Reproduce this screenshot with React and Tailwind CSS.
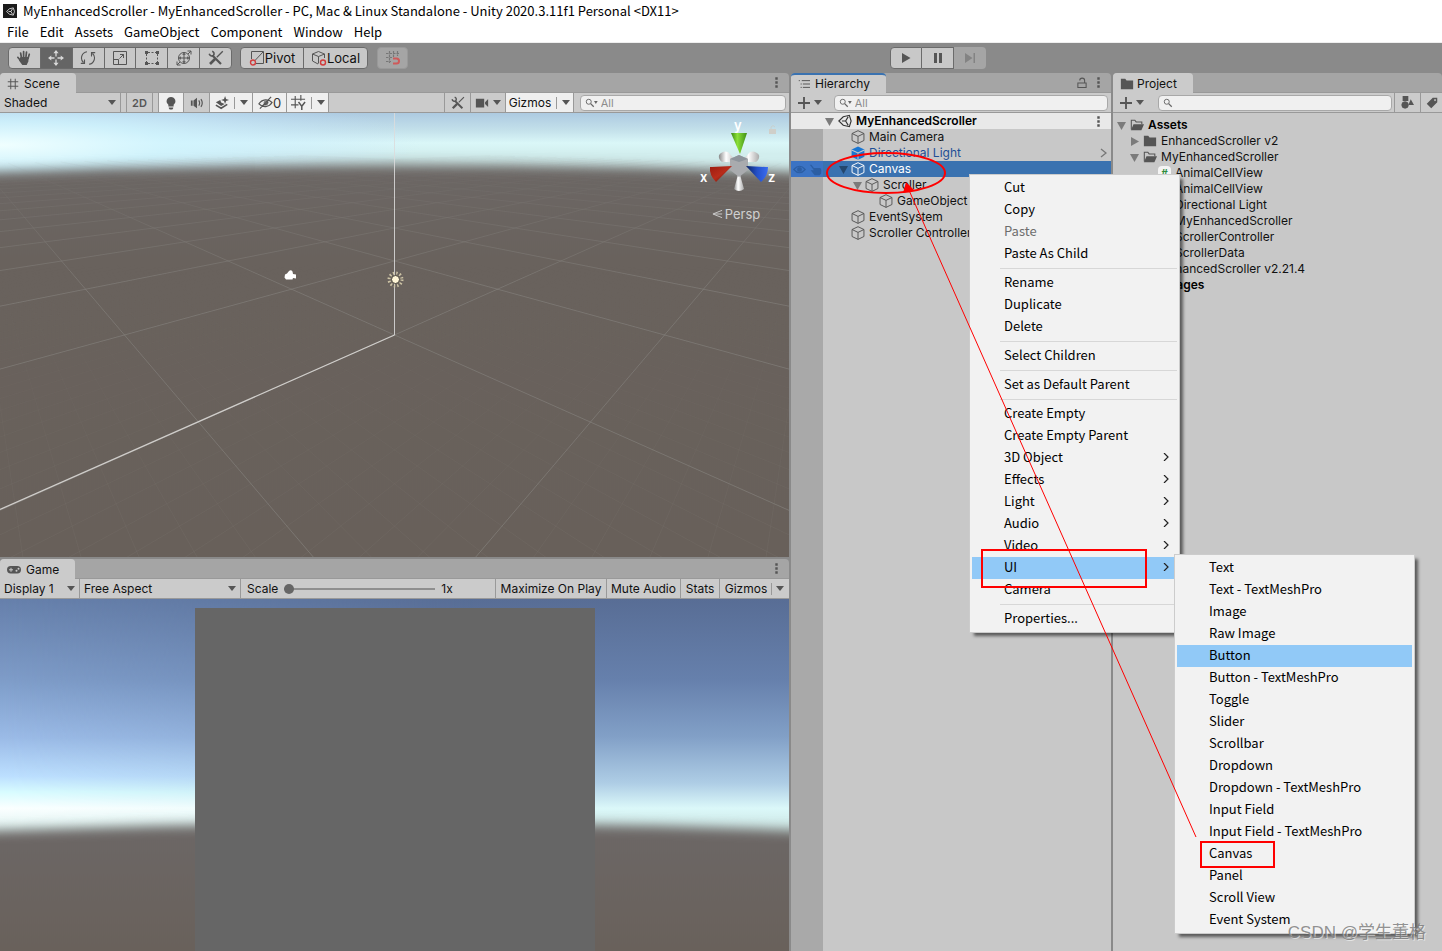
import React from 'react';

/* ---------- icons ---------- */

function Svg({ size = 16, className = '', children }) {
  return (
    <svg width={size} height={size} viewBox="0 0 16 16" fill="none" stroke="currentColor" className={`shrink-0 ${className}`} aria-hidden="true">
      {children}
    </svg>
  )
}

const Caret = ({ className = '' }) => (
  <svg width="8" height="5" viewBox="0 0 8 5" className={`shrink-0 fill-[#555] ${className}`} aria-hidden="true"><path d="M0 0h8L4 5z" /></svg>
)

const UnityIcon = ({ size, className }) => (
  <Svg size={size} className={className}>
    <path strokeWidth="1.300" d="M1 8 6 3.200l7-1.700L15 8l-2 6.500-7-1.700zM4.500 8h4.200M8.700 8l3-5M8.700 8l3 5" />
  </Svg>
)

const HandIcon = () => (
  <Svg>
    <path strokeWidth="1.700" strokeLinecap="round" d="M5.500 8 4.600 3M7.600 7.500V1.600M9.900 7.500l.6-5.300M12 8.500l1.300-4.300M4.500 10.500 1.800 7.300" />
    <path fill="currentColor" stroke="none" d="M4.500 7h8.300l-.5 4.500-1.600 3.500H6.300L3 10.500z" />
  </Svg>
)

const MoveIcon = () => (
  <Svg>
    <path d="M8 2v4.500M8 9.500V14M2 8h4.500M9.500 8H14" strokeWidth="1.300" />
    <path fill="currentColor" stroke="none" d="M8 0l2.600 3.300H5.400zM8 16l2.600-3.300H5.400zM0 8l3.300-2.600v5.200zM16 8l-3.300-2.600v5.200z" />
  </Svg>
)

const RotateIcon = () => (
  <Svg>
    <path strokeWidth="1.100" d="M7 1.800A6.200 6.200 0 0 0 3.500 12.500M.8 13.400h3.700V9.600M9 14.200A6.200 6.200 0 0 0 12.500 3.500M15.200 2.600h-3.700v3.800" />
  </Svg>
)

const ScaleIcon = () => (
  <Svg>
    <path strokeWidth="1" d="M1.500 1.500h13v13h-13zM1.500 9.500h5v5M7.500 8.500l4-4M8 4.500h3.500V8" />
  </Svg>
)

const RectIcon = () => (
  <Svg>
    <path strokeDasharray="2 1.500" d="M4 2.500h8M4 13.500h8M2.500 4v8M13.500 4v8" />
    <path fill="currentColor" stroke="none" d="M1 1h3v3H1zM12 1h3v3h-3zM1 12h3v3H1zM12 12h3v3h-3z" />
  </Svg>
)

const TransformIcon = () => (
  <Svg>
    <circle cx="8" cy="8" r="5.500" />
    <path d="M8 4v8M4 8h8M11.500 1H15v3.500M1 11.500V15h3.500M15 1l-3 3M1 15l3-3" />
    <path fill="currentColor" stroke="none" d="m8 2.500 1.800 2.300H6.200zM8 13.500l1.800-2.300H6.200zM2.500 8l2.300-1.800v3.600zM13.500 8l-2.300-1.800v3.600z" />
  </Svg>
)

const ToolsIcon = ({ size }) => (
  <Svg size={size}>
    <path strokeWidth="2.200" d="m4.500 5.500 8.500 8.500" />
    <path strokeWidth="1.600" d="M1.200 3.800c.6 2 2.600 2.800 4.200 1.600C6.700 4 6 1.900 4.200 1.200" />
    <path strokeWidth="1.300" d="m14.800 1.200-6 6" />
    <path strokeWidth="2.600" d="m7 9-5 5" />
  </Svg>
)

const PivotIcon = () => (
  <Svg>
    <path d="M2.500 9V1.500h12v12H7M5.500 11l8.500-9" stroke="#555" />
    <circle cx="4" cy="12.500" r="2.500" stroke="#d23c3c" strokeWidth="1.400" />
  </Svg>
)

const LocalIcon = () => (
  <Svg>
    <path d="m1.500 4 6-2.500 6 2.500v4M1.500 4v7l5.500 3M1.500 4l6 2.500 6-2.500M7.500 6.500v7" stroke="#555" />
    <circle cx="12" cy="12.500" r="2.500" stroke="#d23c3c" strokeWidth="1.400" />
  </Svg>
)

const SnapIcon = () => (
  <Svg>
    <path strokeWidth="1.200" strokeDasharray="2.500 1" d="M4.500 1v12M8.500 1v6M12.500 1v5M1 3.500h13M1 7.500h7M1 11.500h5" />
    <path stroke="#cf5a5a" strokeWidth="2" d="M8 8.500h3.500a2.500 2.500 0 0 1 0 5H8" />
  </Svg>
)

const HashIcon = () => (
  <Svg size={12}><path strokeWidth="1.300" d="M5 1v14M11 1v14M1 5h14M1 11h14" className="text-[#555]" stroke="currentColor" /></Svg>
)

const BulbIcon = () => (
  <Svg size={14}>
    <path fill="currentColor" stroke="none" d="M8 1a5 5 0 0 1 3 9v2H5v-2a5 5 0 0 1 3-9zM5.500 13h5v1l-1 1.500h-3l-1-1.500z" />
  </Svg>
)

const SpeakerIcon = () => (
  <Svg size={14}>
    <path fill="currentColor" stroke="none" d="M1 5h2v6H1zM4 5l4-3v12l-4-3z" />
    <path strokeWidth="1.300" d="M10 5q2 3 0 6M12.500 3.500q3 4.500 0 9" />
  </Svg>
)

const EffectsIcon = () => (
  <Svg size={14}>
    <path fill="currentColor" stroke="none" d="m1 7 5-2.500 1 3 4 1.500-4 2.500zM11.500 0l1.200 3.300L16 4.500l-3.300 1.200L11.500 9l-1.200-3.300L7 4.500l3.300-1.200z" />
    <path strokeWidth="1.800" d="m1 10.500 6 3.500 7-4.500" />
  </Svg>
)

const EyeOffIcon = () => (
  <Svg size={15}>
    <path strokeWidth="1.300" d="M1 9.500C4 4.500 11 3.500 15 8c-3 5-10 6-14 1.500zM2 14.500 14 2M7 11l4-4" />
    <circle cx="8.500" cy="8.500" r="2" />
  </Svg>
)

const GridYIcon = () => (
  <Svg size={15}>
    <path strokeWidth="1.200" d="M4.500 1v13M10.500 0v6M0 4.500h15M0 10.500h8" />
    <path strokeWidth="1.600" d="m8 7.500 3.500 4.500v4M15 7.500 11.500 12" />
  </Svg>
)

const CameraIcon = () => (
  <Svg size={14}>
    <path fill="currentColor" stroke="none" d="M1 3h9.500v10H1zM11.500 7 15 3.500v9L11.500 9z" />
  </Svg>
)

const SearchIcon = () => (
  <Svg size={10}><circle cx="6" cy="6" r="4" strokeWidth="1.500" /><path strokeWidth="2" d="m9 9 5 5" /></Svg>
)

const KebabIcon = ({ className = '' }) => (
  <Svg size={13} className={className}><path fill="currentColor" stroke="none" d="M6.500 1.500h3v3h-3zM6.500 6.500h3v3h-3zM6.500 11.500h3v3h-3z" /></Svg>
)

const ListIcon = () => (
  <Svg size={12} className="text-[#555]"><path strokeWidth="1.300" d="M5 3.500h11M6.500 8H16M6.500 12.500H16M1 3.500h1.500M3.500 8H5M3.500 12.500H5" /></Svg>
)

const LockIcon = () => (
  <Svg size={12}><path strokeWidth="1.400" d="M2.500 8h11v6h-11zM5 4.500c0-4 6.500-4 6.500 0V8" /></Svg>
)

const FolderIcon = () => (
  <Svg size={14}><path fill="currentColor" stroke="none" d="M1 2h5l1.500 2H15v10H1z" /></Svg>
)

const FolderOpenIcon = () => (
  <Svg size={14}>
    <path strokeWidth="1.200" d="M1.500 13V2.500h4L7 4.500h6.500V7" />
    <path fill="currentColor" stroke="none" d="M4 7h12l-3 7H1z" />
  </Svg>
)

const GamepadIcon = () => (
  <svg width="14" height="8" viewBox="0 0 14 8" className="shrink-0" aria-hidden="true">
    <rect width="14" height="7.500" rx="3.700" fill="#555" />
    <path d="M2 3.800h4M4 1.800v4" stroke="#cbcbcb" />
    <circle cx="9.500" cy="4.800" r="1" fill="#cbcbcb" /><circle cx="11.500" cy="2.800" r="1" fill="#cbcbcb" />
  </svg>
)

const CubeIcon = ({ className = 'text-[#555]' }) => (
  <Svg size={14} className={className}>
    <path d="M8 .8 14.800 4v8L8 15.300 1.200 12V4zM1.200 4 8 7.300 14.800 4M8 7.300v8" strokeWidth="1.100" />
  </Svg>
)

const PrefabIcon = () => (
  <svg width="14" height="14" viewBox="0 0 16 16" className="shrink-0" aria-hidden="true">
    <path d="M8 .5 15.300 4v8.200L8 15.700.7 12.200V4z" fill="#1976d2" />
    <path d="M.7 4.500 8 8l7.300-3.500M8 8v7.500" stroke="#c8c8c8" fill="none" strokeWidth="1.200" />
  </svg>
)

const Foldout = ({ open = true, className = 'fill-[#7b7b7b]' }) => (
  <svg width="9" height="9" viewBox="0 0 9 9" className={`shrink-0 ${className}`} aria-hidden="true">
    <path d={open ? 'M0 1h9L4.500 9z' : 'M1 0v9l8-4.500z'} />
  </svg>
)

/* ---------- shared pieces ---------- */

function TabBar({ icon, title, active, children }) {
  return (
    <div className="flex h-5 shrink-0 items-stretch rounded-t border-b border-[#999] bg-[#a5a5a5]">
      <button className={`-mb-px flex items-center gap-[5px] rounded-t border-t-2 bg-[#cbcbcb] pr-4 pl-[7px] text-[#111] ${active ? 'border-[#3a72b0]' : 'border-[#cbcbcb]'}`}>
        {icon}
        {title}
      </button>
      <div className="ml-auto flex items-center gap-1 pr-[6px] text-[#555]">{children}</div>
    </div>
  )
}

function Search({ label, placeholder, caret, className = '' }) {
  return (
    <label className={`flex h-4 items-center rounded border border-[#a8a8a8] bg-[#f0f0f0] pl-1 text-[#666] ${className}`}>
      <SearchIcon />
      {caret && <svg width="4" height="3" viewBox="0 0 4 3" className="-ml-px fill-[#666]"><path d="M0 0h4L2 3z" /></svg>}
      <input aria-label={label} placeholder={placeholder} className="ml-[3px] w-full min-w-0 bg-transparent text-[11px] outline-none placeholder:text-[#8c8c8c]" />
    </label>
  )
}

function Dropdown({ label, value, className = '' }) {
  return (
    <label className={`flex h-full items-center border-r border-[#999] pr-1 pl-1 ${className}`}>
      <select aria-label={label} className="w-full min-w-0 appearance-none bg-transparent outline-none"><option>{value}</option></select>
      <Caret />
    </label>
  )
}

function BarButton({ label, on, className = '', children }) {
  return (
    <button aria-label={label} className={`flex h-full shrink-0 items-center justify-center border-r border-[#999] ${on ? 'bg-[#efefef]' : ''} ${className}`}>
      {children}
    </button>
  )
}

/* ---------- top bars ---------- */

const TOOLS = [
  ['Hand', HandIcon], ['Move', MoveIcon], ['Rotate', RotateIcon], ['Scale', ScaleIcon],
  ['Rect', RectIcon], ['Transform', TransformIcon], ['Custom tools', ToolsIcon],
]

function TitleBar() {
  return (
    <header className="bg-white font-['Noto_Sans_CJK_SC','Noto_Sans',sans-serif] text-[13px] text-black">
      <div className="flex h-[22px] items-center gap-[6px] pl-[3px]">
        <span className="flex size-[14px] items-center justify-center bg-[#1c1c1c] text-white"><UnityIcon size={9} /></span>
        <h1>MyEnhancedScroller - MyEnhancedScroller - PC, Mac &amp; Linux Standalone - Unity 2020.3.11f1 Personal &lt;DX11&gt;</h1>
      </div>
      <nav className="flex h-[21px] items-center gap-[11px] border-b border-[#eee] pl-[7px]">
        {['File', 'Edit', 'Assets', 'GameObject', 'Component', 'Window', 'Help'].map((m) => <button key={m}>{m}</button>)}
      </nav>
    </header>
  )
}

function Toolbar() {
  return (
    <div className="flex h-[30px] shrink-0 items-center bg-[#8a8a8a] pl-2 text-[#555]">
      <div className="flex h-[22px] w-[224px] divide-x divide-[#6b6b6b] overflow-hidden rounded border border-[#6b6b6b] bg-[#c8c8c8]">
        {TOOLS.map(([name, Icon], i) => (
          <button key={name} aria-label={name} className={`flex flex-1 items-center justify-center ${i === 1 ? 'bg-[#656565] text-[#d8d8d8]' : ''}`}><Icon /></button>
        ))}
      </div>
      <div className="ml-2 flex h-[22px] divide-x divide-[#6b6b6b] rounded border border-[#6b6b6b] bg-[#c8c8c8] text-[13px] text-[#111]">
        <button className="flex w-[63px] items-center justify-center"><PivotIcon />Pivot</button>
        <button className="flex w-[63px] items-center justify-center"><LocalIcon />Local</button>
      </div>
      <button aria-label="Snap" className="ml-[9px] flex h-[22px] w-[31px] items-center justify-center rounded border border-[#999] bg-[#a5a5a5] text-[#777]"><SnapIcon /></button>
      <div className="ml-[482px] flex h-[22px]">
        <button aria-label="Play" className="flex w-8 items-center justify-center rounded-l border border-[#6b6b6b] bg-[#c8c8c8]">
          <Svg><path fill="currentColor" stroke="none" d="M4 3v10l8.500-5z" /></Svg>
        </button>
        <button aria-label="Pause" className="flex w-8 items-center justify-center border-y border-r border-[#6b6b6b] bg-[#c8c8c8]">
          <Svg><path fill="currentColor" stroke="none" d="M4 3h3v10H4zM9 3h3v10H9z" /></Svg>
        </button>
        <button aria-label="Step" className="flex w-8 items-center justify-center rounded-r bg-[#a5a5a5] text-[#838383]">
          <Svg><path fill="currentColor" stroke="none" d="M3 3v10l7.500-5zM11.500 3H13v10h-1.500z" /></Svg>
        </button>
      </div>
    </div>
  )
}

/* ---------- scene view ---------- */

// ground plane -> view, both axes run at 45 degrees from the camera
function project(a, b) {
  const w = 1 + 0.311 * (a + b)
  return [394.5 + (135 * (a - b)) / w, 29 + 193 / w]
}

function gridPath(from, to, step, far) {
  let d = ''
  for (let i = from; i <= to; i += 1) {
    const n = i * step
    const near = (0.35 - 1) / 0.311 - n
    const [x1, y1] = project(n, near)
    const [x2, y2] = project(n, far)
    d += `M${x1.toFixed(1)} ${y1.toFixed(1)}L${x2.toFixed(1)} ${y2.toFixed(1)}`
    d += `M${(789 - x1).toFixed(1)} ${y1.toFixed(1)}L${(789 - x2).toFixed(1)} ${y2.toFixed(1)}`
  }
  return d
}

const MAJOR = gridPath(-9, 16, 1, 26)
const MINOR = gridPath(-45, 30, 0.1, 3)

function SceneCanvas() {
  return (
    <svg className="absolute inset-0 size-full" viewBox="0 0 789 444" preserveAspectRatio="none" fill="none" aria-hidden="true">
      <defs>
        <linearGradient id="sky" x1="0" y1="0" x2="0" y2="60" gradientUnits="userSpaceOnUse">
          <stop offset="0" stopColor="#adcae1" /><stop offset=".28" stopColor="#c3e0ea" />
          <stop offset=".5" stopColor="#daf7f8" /><stop offset=".68" stopColor="#d2eeee" />
        </linearGradient>
        <radialGradient id="glow" cx="0" cy="0" r="1" gradientTransform="translate(0 32) scale(420 60)" gradientUnits="userSpaceOnUse">
          <stop offset="0" stopColor="#f0ffff" /><stop offset=".4" stopColor="#d0f4ff" stopOpacity=".8" /><stop offset="1" stopColor="#c4e4ff" stopOpacity="0" />
        </radialGradient>
        <linearGradient id="ground" x1="0" y1="50" x2="0" y2="444" gradientUnits="userSpaceOnUse">
          <stop offset="0" stopColor="#6c6765" /><stop offset=".25" stopColor="#69625d" /><stop offset="1" stopColor="#68605a" />
        </linearGradient>
        <linearGradient id="majorFade" x1="0" y1="60" x2="0" y2="444" gradientUnits="userSpaceOnUse">
          <stop offset="0" stopColor="#fff" stopOpacity=".1" /><stop offset=".3" stopColor="#fff" /><stop offset="1" stopColor="#fff" />
        </linearGradient>
        <linearGradient id="minorFade" x1="0" y1="150" x2="0" y2="444" gradientUnits="userSpaceOnUse">
          <stop offset="0" stopColor="#fff" stopOpacity="0" /><stop offset=".5" stopColor="#fff" stopOpacity=".5" /><stop offset="1" stopColor="#fff" />
        </linearGradient>
        <mask id="majorMask"><rect width="789" height="444" fill="url(#majorFade)" /></mask>
        <mask id="minorMask"><rect width="789" height="444" fill="url(#minorFade)" /></mask>
        <filter id="haze" x="-20%" y="-20%" width="140%" height="140%" colorInterpolationFilters="sRGB"><feGaussianBlur stdDeviation="0 6" /></filter>
      </defs>
      <rect width="789" height="444" fill="url(#sky)" />
      <rect width="789" height="100" fill="url(#glow)" />
      <path d="M-40 60Q394 43 830 60V520H-40z" fill="url(#ground)" filter="url(#haze)" />
      <path d={MAJOR} stroke="#8b8985" strokeOpacity=".5" mask="url(#majorMask)" />
      <path d={MINOR} stroke="#83827a" strokeOpacity=".18" mask="url(#minorMask)" />
      <path d="M394.500 0V222" stroke="#dcdcdc" strokeOpacity=".85" />
      <path d="M394.500 222 0 396.500" stroke="#d0cecb" strokeWidth="1.200" />
    </svg>
  )
}

function SceneGizmo() {
  return (
    <div className="absolute top-1 right-3 flex w-[82px] flex-col items-center text-[#d0d0d0]">
      <svg width="82" height="84" viewBox="0 0 82 84" aria-hidden="true">
        <defs>
          <linearGradient id="cone"><stop stopColor="#888" /><stop offset=".4" stopColor="#fff" /><stop offset="1" stopColor="#aaa" /></linearGradient>
          <linearGradient id="coneY"><stop stopColor="#3d8a12" /><stop offset=".4" stopColor="#8be03a" /><stop offset="1" stopColor="#3f8f14" /></linearGradient>
          <linearGradient id="coneX" x1="0" y1="0" x2="1" y2="1"><stop stopColor="#9c1c10" /><stop offset=".5" stopColor="#b92c1a" /><stop offset="1" stopColor="#4a0d08" /></linearGradient>
          <linearGradient id="coneZ" x1="0" y1="0" x2="1" y2="0"><stop stopColor="#0c2360" /><stop offset=".5" stopColor="#2450c8" /><stop offset="1" stopColor="#3a6cf0" /></linearGradient>
        </defs>
        <path d="M42 45 33 35q-5-2-9 3-1 4 3 7z" fill="url(#cone)" />
        <path d="M46 45 55 35q5-2 9 3 1 4-3 7z" fill="url(#cone)" />
        <path d="M44 54 39 72q5 4 10 0z" fill="url(#cone)" />
        <path d="m44 38 9 4v11l-9 7-9-7V42z" fill="#a9abae" />
        <path d="m44 38 9 4-9 3-9-3z" fill="#8d949b" />
        <path d="M36 16h16l-7 21z" fill="url(#coneY)" />
        <path d="M37 49 21 65q-7-7-6-15h2z" fill="url(#coneX)" />
        <path d="m51 49 15 16q7-6 7-15h-2z" fill="url(#coneZ)" />
        <path d="M74 12h7v5h-7z" fill="#cfcfc9" /><path d="M76 12v-2q2-3 4 0" fill="none" stroke="#c8d0ce" />
        <g fill="#fff" fontSize="13" fontFamily="Inter, sans-serif" fontWeight="600">
          <text x="39" y="13">y</text><text x="5" y="65">x</text><text x="73" y="65">z</text>
        </g>
      </svg>
      <button className="mt-1 flex items-center gap-[2px] text-[13px] leading-[18px]">
        <svg width="11" height="10" viewBox="0 0 12 10" fill="none" stroke="currentColor" aria-hidden="true"><path d="M11 1 1 5l10 4M2 5h9" /></svg>
        Persp
      </button>
    </div>
  )
}

function ScenePanel() {
  return (
    <section className="flex min-h-0 flex-col">
      <TabBar icon={<HashIcon />} title="Scene"><KebabIcon /></TabBar>
      <div className="flex h-5 shrink-0 items-center border-b border-[#999] bg-[#cbcbcb] text-[#555]">
        <Dropdown label="Draw mode" value="Shaded" className="w-[121px] text-[#111]" />
        <BarButton className="ml-[5px] w-[27px] border-l text-[11px] font-semibold">2D</BarButton>
        <BarButton label="Lighting" on className="ml-[5px] w-[26px] border-l"><BulbIcon /></BarButton>
        <BarButton label="Audio" className="w-[26px]"><SpeakerIcon /></BarButton>
        <BarButton label="Effects" on className="w-[43px] gap-[5px]"><EffectsIcon /><i className="h-3 w-px bg-[#999]" /><Caret /></BarButton>
        <BarButton label="Hidden objects" on className="w-[34px] text-[13px]"><EyeOffIcon /><span className="text-[#333]">0</span></BarButton>
        <BarButton label="Grid" on className="w-[42px] gap-[5px]"><GridYIcon /><i className="h-3 w-px bg-[#999]" /><Caret /></BarButton>
        <BarButton label="Component tools" className="ml-auto w-[27px] border-l"><ToolsIcon size={14} /></BarButton>
        <BarButton label="Camera" className="w-[35px] gap-1"><CameraIcon /><Caret /></BarButton>
        <BarButton on className="w-[68px] gap-[5px] text-[#111]">Gizmos<i className="h-3 w-px bg-[#999]" /><Caret /></BarButton>
        <Search label="Search scene" placeholder="All" caret className="mr-[3px] ml-[6px] w-[206px]" />
      </div>
      <div className="relative min-h-0 flex-1 overflow-hidden">
        <SceneCanvas />
        <SceneGizmo />
        <svg className="absolute top-[157px] left-[36%]" width="13" height="10" viewBox="0 0 13 10" aria-hidden="true">
          <path d="M3 3.500 5 1q2-1.500 3.500.5L9 4l3 .5v4L9 8l-.5 1.500H2L.5 7.500 1 4.500z" fill="#fff" />
        </svg>
        <svg className="absolute top-[158px] left-[49%]" width="17" height="17" viewBox="0 0 17 17" aria-hidden="true">
          <circle cx="8.500" cy="8.500" r="6.500" fill="none" stroke="#cdc4a6" strokeWidth="3" strokeDasharray="1.400 2" />
          <circle cx="8.500" cy="8.500" r="4" fill="#fff6d8" stroke="#4b463c" />
        </svg>
      </div>
    </section>
  )
}

/* ---------- game view ---------- */

function GamePanel() {
  return (
    <section className="flex min-h-0 flex-col">
      <TabBar icon={<GamepadIcon />} title="Game"><KebabIcon /></TabBar>
      <div className="flex h-5 shrink-0 items-center border-b border-[#999] bg-[#cbcbcb] text-[#111]">
        <Dropdown label="Display" value="Display 1" className="w-[80px]" />
        <Dropdown label="Aspect" value="Free Aspect" className="w-[161px]" />
        <label className="flex items-center gap-[6px] pl-[6px]">
          Scale
          <input
            type="range" min="1" max="5" defaultValue="1"
            className="h-[10px] w-[151px] appearance-none bg-transparent [&::-webkit-slider-runnable-track]:h-[2px] [&::-webkit-slider-runnable-track]:bg-[#8f8f8f] [&::-webkit-slider-thumb]:-mt-1 [&::-webkit-slider-thumb]:size-[10px] [&::-webkit-slider-thumb]:appearance-none [&::-webkit-slider-thumb]:rounded-full [&::-webkit-slider-thumb]:bg-[#666]"
          />
          1x
        </label>
        <BarButton className="ml-auto w-[112px] border-l">Maximize On Play</BarButton>
        <BarButton className="w-[74px]">Mute Audio</BarButton>
        <BarButton className="w-[39px]">Stats</BarButton>
        <BarButton className="w-[69px] gap-1 border-r-0">Gizmos<i className="h-3 w-px bg-[#999]" /><Caret /></BarButton>
      </div>
      <div className="relative flex min-h-0 flex-1 justify-center overflow-hidden pt-[9px]">
        <svg className="absolute inset-0 size-full" viewBox="0 0 789 352" preserveAspectRatio="none" aria-hidden="true">
          <defs>
            <linearGradient id="gsky" x1="0" y1="0" x2="0" y2="230" gradientUnits="userSpaceOnUse">
              <stop offset="0" stopColor="#586d95" /><stop offset=".35" stopColor="#6680ac" /><stop offset=".6" stopColor="#82a0c7" />
              <stop offset=".8" stopColor="#aecde5" /><stop offset=".91" stopColor="#dbf8f9" /><stop offset="1" stopColor="#cde6e4" />
            </linearGradient>
            <linearGradient id="gleft" x1="0" y1="0" x2="0" y2="230" gradientUnits="userSpaceOnUse">
              <stop offset="0" stopColor="#6680ab" /><stop offset=".35" stopColor="#7e9cc8" /><stop offset=".6" stopColor="#9abae6" />
              <stop offset=".77" stopColor="#bcdfff" /><stop offset=".84" stopColor="#d8fcff" /><stop offset=".91" stopColor="#fbffff" /><stop offset="1" stopColor="#e0f4f2" />
            </linearGradient>
            <linearGradient id="gside"><stop offset="0" stopColor="#fff" /><stop offset=".25" stopColor="#fff" stopOpacity=".7" /><stop offset=".6" stopColor="#fff" stopOpacity="0" /></linearGradient>
            <mask id="gmask"><rect width="789" height="352" fill="url(#gside)" /></mask>
            <linearGradient id="gground" x1="0" y1="225" x2="0" y2="352" gradientUnits="userSpaceOnUse">
              <stop offset="0" stopColor="#6c6766" /><stop offset="1" stopColor="#69615b" />
            </linearGradient>
            <filter id="ghaze" x="-20%" y="-20%" width="140%" height="140%" colorInterpolationFilters="sRGB"><feGaussianBlur stdDeviation="0 6" /></filter>
          </defs>
          <rect width="789" height="352" fill="url(#gsky)" />
          <rect width="789" height="352" fill="url(#gleft)" mask="url(#gmask)" />
          <path d="M-40 233Q394 215 830 233V420H-40z" fill="url(#gground)" filter="url(#ghaze)" />
        </svg>
        <div className="relative w-[400px] bg-[#666]" />
      </div>
    </section>
  )
}

/* ---------- hierarchy ---------- */

const HIERARCHY = [
  { name: 'Main Camera', pad: 'pl-[60px]' },
  { name: 'Directional Light', pad: 'pl-[60px]', prefab: true },
  { name: 'Canvas', pad: 'pl-[48px]', fold: true, selected: true },
  { name: 'Scroller', pad: 'pl-[62px]', fold: true },
  { name: 'GameObject', pad: 'pl-[88px]' },
  { name: 'EventSystem', pad: 'pl-[60px]' },
  { name: 'Scroller Controller', pad: 'pl-[60px]' },
]

function HierarchyRow({ item }) {
  return (
    <li className={`relative flex h-4 items-center text-[12px] ${item.pad} ${item.selected ? 'bg-[#3a72b0] text-white' : 'text-[#111]'}`}>
      {item.selected && (
        <span className="absolute inset-y-0 left-0 flex w-8 items-center justify-around bg-[#3b73c4] text-[#2c5ea3]">
          <Svg size={13}><path strokeWidth="1.500" d="M1 8q7-8 14 0-7 8-14 0z" /><circle cx="8" cy="8" r="2.500" fill="currentColor" /></Svg>
          <Svg size={13}><path fill="currentColor" stroke="none" d="M1 2h2l3 4h8q2 2 1 7l-2 2H7L2 9h4z" /></Svg>
        </span>
      )}
      {item.fold && <Foldout className={item.selected ? 'mr-[3px] fill-[#24476e]' : 'mr-[3px] fill-[#7b7b7b]'} />}
      {item.prefab ? <PrefabIcon /> : <CubeIcon className={item.selected ? 'text-white' : 'text-[#555]'} />}
      <span className={`ml-1 whitespace-nowrap ${item.prefab ? 'text-[#1f4f96]' : ''}`}>{item.name}</span>
      {item.prefab && <svg width="7" height="10" viewBox="0 0 7 10" fill="none" stroke="#777" strokeWidth="1.300" className="mr-1 ml-auto"><path d="m1 1 5 4-5 4" /></svg>}
    </li>
  )
}

function HierarchyPanel() {
  return (
    <section className="flex min-h-0 min-w-0 flex-col">
      <TabBar icon={<ListIcon />} title="Hierarchy" active><LockIcon /><KebabIcon /></TabBar>
      <div className="flex h-5 shrink-0 items-center border-b border-[#999] bg-[#cbcbcb] text-[#555]">
        <button aria-label="Create" className="ml-[7px] flex items-center gap-1">
          <Svg size={12}><path strokeWidth="2.500" d="M8 0v16M0 8h16" /></Svg><Caret />
        </button>
        <Search label="Search hierarchy" placeholder="All" caret className="mr-[3px] ml-3 flex-1" />
      </div>
      <div className="flex-1 bg-[linear-gradient(90deg,#a9a9a9_32px,#c8c8c8_32px)]">
        <div className="flex h-4 items-center gap-1 bg-[#e9e9e9] pr-[6px] pl-[34px] text-[12px] font-semibold text-black">
          <Foldout /><UnityIcon size={14} className="text-[#333]" />MyEnhancedScroller<KebabIcon className="ml-auto text-[#555]" />
        </div>
        <ul>{HIERARCHY.map((item) => <HierarchyRow key={item.name} item={item} />)}</ul>
      </div>
    </section>
  )
}

/* ---------- project ---------- */

const ASSETS = ['AnimalCellView', 'AnimalCellView', 'Directional Light', 'MyEnhancedScroller', 'ScrollerController', 'ScrollerData']

function ProjectPanel() {
  return (
    <section className="flex min-h-0 min-w-0 flex-col">
      <TabBar icon={<span className="-mr-[2px] text-[#555]"><FolderIcon /></span>} title="Project" />
      <div className="flex h-5 shrink-0 items-center border-b border-[#999] bg-[#cbcbcb] text-[#555]">
        <button aria-label="Create asset" className="ml-[7px] flex items-center gap-1">
          <Svg size={12}><path strokeWidth="2.500" d="M8 0v16M0 8h16" /></Svg><Caret />
        </button>
        <Search label="Search project" className="mr-[2px] ml-[14px] flex-1" />
        <BarButton label="Search by type" className="w-[27px] border-l">
          <Svg size={13}><path fill="currentColor" stroke="none" d="M2 0h7v6H2zM12 4l4 7H9z" /><circle cx="5" cy="11" r="4" fill="currentColor" /></Svg>
        </BarButton>
        <BarButton label="Search by label" className="w-[21px] border-r-0">
          <Svg size={12}><path fill="currentColor" stroke="none" fillRule="evenodd" d="M9 1h6v6l-8 8-6-6zM12 3a1.200 1.200 0 1 0 .1 0z" /></Svg>
        </BarButton>
      </div>
      <ul className="flex-1 bg-[#c8c8c8] pt-1 text-[12px] text-[#111] [&>li]:flex [&>li]:h-4 [&>li]:items-center">
        <li className="gap-1 pl-1 font-semibold text-black"><Foldout /><span className="text-[#555]"><FolderOpenIcon /></span>Assets</li>
        <li className="gap-1 pl-[17px]"><Foldout open={false} /><span className="text-[#555]"><FolderIcon /></span>EnhancedScroller v2</li>
        <li className="gap-1 pl-[17px]"><Foldout /><span className="text-[#555]"><FolderOpenIcon /></span>MyEnhancedScroller</li>
        {ASSETS.map((name, i) => (
          <li key={i} className="gap-1 pl-[45px]">
            <span className="flex h-[14px] w-[13px] shrink-0 items-center justify-center rounded-sm bg-[#f4f4f4] text-[10px] font-bold text-[#2e8b3d]">#</span>
            {name}
          </li>
        ))}
        <li className="gap-1 pl-[30px]"><CubeIcon />EnhancedScroller v2.21.4</li>
        <li className="gap-1 pl-1 font-semibold text-black"><Foldout open={false} /><span className="text-[#555]"><FolderIcon /></span>Packages</li>
      </ul>
    </section>
  )
}

/* ---------- context menus ---------- */

const MENU = [
  ['Cut', 'Copy', 'Paste', 'Paste As Child'],
  ['Rename', 'Duplicate', 'Delete'],
  ['Select Children'],
  ['Set as Default Parent'],
  ['Create Empty', 'Create Empty Parent', '3D Object', 'Effects', 'Light', 'Audio', 'Video', 'UI', 'Camera'],
  ['Properties...'],
]
const HAS_SUBMENU = ['3D Object', 'Effects', 'Light', 'Audio', 'Video', 'UI']

const UI_MENU = [
  'Text', 'Text - TextMeshPro', 'Image', 'Raw Image', 'Button', 'Button - TextMeshPro', 'Toggle', 'Slider', 'Scrollbar',
  'Dropdown', 'Dropdown - TextMeshPro', 'Input Field', 'Input Field - TextMeshPro', 'Canvas', 'Panel', 'Scroll View', 'Event System',
]

function MenuItem({ name, active, disabled, arrow }) {
  return (
    <button role="menuitem" disabled={disabled} className={`flex h-[22px] w-full items-center justify-between pr-2 pb-[2px] pl-8 text-left ${active ? 'bg-[#91c9f7]' : ''} ${disabled ? 'text-[#6d6d6d]' : ''}`}>
      {name}
      {arrow && <svg width="6" height="8" viewBox="0 0 6 8" fill="none" stroke="#222" strokeWidth="1.200" aria-hidden="true"><path d="m1 0 4 4-4 4" /></svg>}
    </button>
  )
}

const menuBox = "absolute border border-[#ccc] bg-[#f2f2f2] p-[2px] font-['Noto_Sans_CJK_SC','Noto_Sans',sans-serif] text-[13px] text-black shadow-[4px_4px_3px_-1px_rgba(0,0,0,0.55)]"

function ContextMenus() {
  return (
    <>
      <div role="menu" className={`${menuBox} top-[174px] left-[969px] w-[211px]`}>
        {MENU.map((group, i) => (
          <div key={i}>
            {i > 0 && <hr className="my-[3px] ml-7 border-[#d7d7d7]" />}
            {group.map((name) => (
              <MenuItem key={name} name={name} active={name === 'UI'} disabled={name === 'Paste'} arrow={HAS_SUBMENU.includes(name)} />
            ))}
          </div>
        ))}
      </div>
      <div role="menu" className={`${menuBox} top-[554px] left-[1174px] w-[241px]`}>
        {UI_MENU.map((name) => <MenuItem key={name} name={name} active={name === 'Button'} />)}
      </div>
    </>
  )
}

function Annotations() {
  return (
    <svg className="pointer-events-none absolute top-0 left-0" width="1442" height="951" fill="none" stroke="#f00" strokeWidth="2" aria-hidden="true">
      <ellipse cx="886" cy="173" rx="59" ry="20" />
      <path d="M1196 837 908 188" strokeWidth="1" />
      <path d="m906 182 8 8-11 3z" fill="#f00" stroke="none" />
      <rect x="982" y="550" width="164" height="37" />
      <rect x="1201" y="842" width="73" height="25" />
    </svg>
  )
}

export default function App() {
  return (
    <div className="relative flex h-screen flex-col overflow-hidden bg-[#8a8a8a] font-[Inter,sans-serif] text-[12px] leading-4">
      <TitleBar />
      <Toolbar />
      <main className="grid min-h-0 flex-1 grid-cols-[789fr_320fr_329fr] gap-[2px]">
        <div className="grid min-h-0 grid-rows-[484fr_392fr] gap-[2px]">
          <ScenePanel />
          <GamePanel />
        </div>
        <HierarchyPanel />
        <ProjectPanel />
      </main>
      <ContextMenus />
      <Annotations />
      <p className="absolute right-4 bottom-2 font-['Liberation_Sans','Noto_Sans_CJK_SC',sans-serif] text-[17px] leading-5 text-[#777]/80 [text-shadow:1px_1px_0_#fff8]">CSDN @学生董格</p>
    </div>
  )
}
